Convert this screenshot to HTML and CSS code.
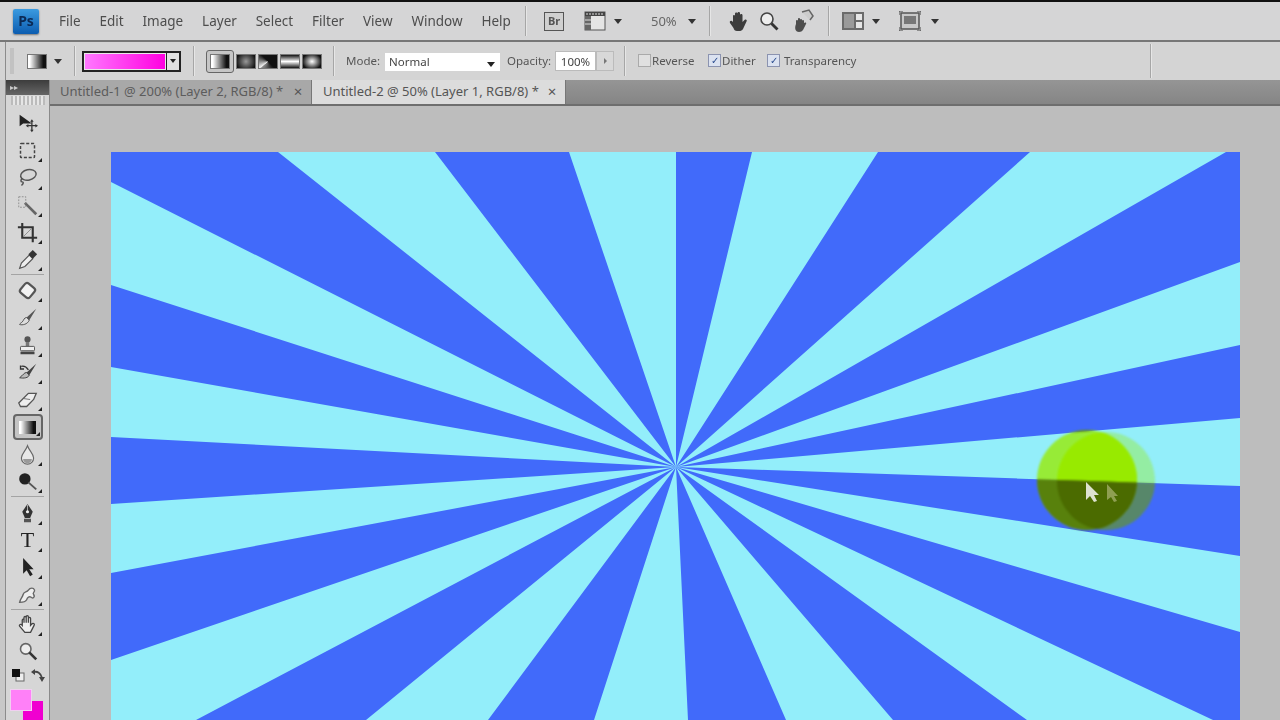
FILE: index.html
```html
<!DOCTYPE html>
<html lang="en">
<head>
    <meta charset="utf-8">
    <title>Adobe Photoshop CS4</title>
    <link rel="stylesheet" href="styles.css">
</head>
<body>
    <!-- Application bar -->
    <header class="menu-row soft">
        <div class="ps-logo">Ps</div>
        <nav class="menu">
            <span>File</span><span>Edit</span><span>Image</span><span>Layer</span><span>Select</span><span>Filter</span><span>View</span><span>Window</span><span>Help</span>
        </nav>
        <i class="sep sep-a"></i>
        <div class="br-btn">Br</div>
        <svg class="app-icon view-icon" width="22" height="20" viewBox="0 0 22 20"><rect x="1" y="1" width="20" height="18" fill="#e4e4e4" stroke="#555"/><rect x="1" y="1" width="20" height="4" fill="#444"/><path d="M3 2v2M6 2v2M9 2v2M12 2v2M15 2v2M18 2v2" stroke="#ddd"/><rect x="1" y="5" width="6" height="14" fill="#666"/><path d="M1 9h6M1 13h6" stroke="#ddd"/></svg>
        <i class="caret caret-view"></i>
        <span class="zoom-level">50%</span>
        <i class="caret caret-zoom"></i>
        <i class="sep sep-b"></i>
        <svg class="hand-icon" width="22" height="22" viewBox="0 0 22 22"><path d="M5 12V6c0-1.500 2-1.500 2 0v3V3.500c0-1.500 2.500-1.500 2.500 0V9V3c0-1.500 2.500-1.500 2.500 0v6V5c0-1.500 2.500-1.500 2.500 0v7l2-2c1.500-1.300 3 .2 2 1.500L15 19c-1 1.500-2 2-4 2H9c-2 0-3-1-3.500-3L2 13c-1-2 1.500-3 2.500-1.500z" fill="#3d3d3d"/></svg>
        <svg class="glass-icon" width="20" height="20" viewBox="0 0 20 20"><circle cx="8" cy="8" r="6" fill="#eee" stroke="#444" stroke-width="1.600"/><path d="M12.500 12.500L18.500 18.500" stroke="#333" stroke-width="2.800"/></svg>
        <svg class="rotate-icon" width="22" height="24" viewBox="0 0 22 24"><path d="M9 3l7-2 4 6-3 4" fill="#ccc" stroke="#666" stroke-width="1.500"/><path d="M3 15v-3c0-1.500 2-1.500 2 0v-2c0-1.500 2-1.500 2 0v1c0-1.500 2-1.500 2 0v1c0-1.500 2-1.500 2 0v2c1-1 3-.5 2 1l-3 6c-1 1-2 2-4 2-3 0-5-3-3-8z" fill="#4d4d4d"/></svg>
        <i class="sep sep-c"></i>
        <svg class="arrange-icon" width="22" height="18" viewBox="0 0 22 18"><rect width="22" height="18" fill="#6b6b6b"/><rect x="2" y="2" width="10" height="14" fill="#9a9a9a"/><rect x="14" y="2" width="6" height="6" fill="#e6e6e6"/><rect x="14" y="10" width="6" height="6" fill="#e6e6e6"/></svg>
        <i class="caret caret-arrange"></i>
        <svg class="screen-icon" width="22" height="20" viewBox="0 0 22 20"><rect x="2" y="2" width="18" height="16" fill="#c8c8c8" stroke="#555" stroke-width="1.500"/><rect x="5" y="5" width="12" height="8" fill="#777"/><path d="M0 4V0h4M18 0h4v4M0 16v4h4M18 20h4v-4" fill="none" stroke="#444"/></svg>
        <i class="caret caret-screen"></i>
    </header>

    <!-- Tool options -->
    <section class="options-row soft">
        <i class="grip"></i>
        <div class="grad-icon g-linear preset-icon"></div>
        <i class="caret caret-preset"></i>
        <i class="sep sep-d"></i>
        <div class="grad-picker">
            <div class="grad-fill"></div>
            <div class="grad-drop"><i class="caret"></i></div>
        </div>
        <i class="sep sep-e"></i>
        <div class="mode-btns">
            <div class="mode-on"><div class="grad-icon g-linear"></div></div>
            <div class="grad-icon g-radial"></div>
            <div class="grad-icon g-angle"></div>
            <div class="grad-icon g-reflect"></div>
            <div class="grad-icon g-diamond"></div>
        </div>
        <i class="sep sep-f"></i>
        <span class="opt-label mode-label">Mode:</span>
        <div class="select-box">Normal<i class="caret"></i></div>
        <span class="opt-label opacity-label">Opacity:</span>
        <div class="opacity-box">100%</div>
        <div class="opacity-step"><i></i></div>
        <i class="sep sep-g"></i>
        <span class="check check-reverse"></span><span class="opt-label reverse-label">Reverse</span>
        <span class="check on check-dither">✓</span><span class="opt-label dither-label">Dither</span>
        <span class="check on check-trans">✓</span><span class="opt-label trans-label">Transparency</span>
        <i class="sep sep-h"></i>
    </section>

    <div class="main">
        <!-- Tools panel -->
        <aside class="toolbox soft">
            <div class="panel-head">▸▸</div>
            <div class="panel-grip"></div>
            <div class="tool"><svg viewBox="0 0 24 24"><path d="M3 2l0 13 4-3 10 0z" fill="#222"/><path d="M17 9v11M11.500 14.500h11" stroke="#333" stroke-width="1.500"/><path d="M17 7l2 3h-4zM17 22l2-3h-4zM10 14.500l3-2v4zM24 14.500l-3-2v4z" fill="#333"/></svg></div>
            <div class="tool more"><svg viewBox="0 0 24 24"><rect x="4" y="4" width="16" height="16" rx="1" fill="none" stroke="#444" stroke-width="1.700" stroke-dasharray="3.500 2"/></svg></div>
            <div class="tool more"><svg viewBox="0 0 24 24"><ellipse cx="13" cy="9" rx="9" ry="6" fill="none" stroke="#555" stroke-width="1.700" transform="rotate(-12 13 9)"/><path d="M6 13c-2 2-2 4 0 4s1 3-1 4" fill="none" stroke="#555" stroke-width="1.700"/></svg></div>
            <div class="tool more"><svg viewBox="0 0 24 24"><path d="M9 9l13 13" stroke="#666" stroke-width="3"/><rect x="2" y="2" width="8" height="12" fill="none" stroke="#888" stroke-dasharray="2 1.500"/></svg></div>
            <div class="tool more"><svg viewBox="0 0 24 24"><path d="M6 1v17h17M1 6h17v17" fill="none" stroke="#333" stroke-width="2.400"/><path d="M7 17L17 7" stroke="#888"/></svg></div>
            <div class="tool more"><svg viewBox="0 0 24 24"><path d="M3 22l2-6 9-9 4 4-9 9z" fill="#eee" stroke="#555" stroke-width="1.300"/><path d="M13 6l5-5 5 5-5 5z" fill="#333"/></svg></div>
            <div class="tool-sep"></div>
            <div class="tool more"><svg viewBox="0 0 24 24"><rect x="5" y="5" width="14" height="14" rx="3" fill="#f2f2f2" stroke="#555" stroke-width="2.500" transform="rotate(40 12 12)"/></svg></div>
            <div class="tool more"><svg viewBox="0 0 24 24"><path d="M22 2L11 12l3 3z" fill="#555"/><path d="M11 12c-3 0-3 3-5 5-1 1-3 2-3 3 3 1 9 0 11-5z" fill="#ddd" stroke="#444"/></svg></div>
            <div class="tool more"><svg viewBox="0 0 24 24"><circle cx="12" cy="5" r="3.500" fill="#555"/><path d="M10 8h4v5h-4z" fill="#777"/><rect x="4" y="13" width="16" height="5" rx="1" fill="#eee" stroke="#444"/><rect x="4" y="19" width="16" height="3" fill="#444"/></svg></div>
            <div class="tool more"><svg viewBox="0 0 24 24"><path d="M22 2L11 12l3 3z" fill="#444"/><path d="M11 12c-3 0-4 3-8 6 5 1 10 0 11-3z" fill="#bbb" stroke="#333"/><path d="M5 5c4-1 6 1 8 4M4 4v4h4" fill="none" stroke="#333" stroke-width="1.500"/></svg></div>
            <div class="tool more"><svg viewBox="0 0 24 24"><path d="M2 16L13 5h9l-3 7-8 8H4z" fill="#eee" stroke="#555" stroke-width="1.500"/><path d="M8 11l7 1" stroke="#666"/></svg></div>
            <div class="tool tool-on more"><div class="grad-icon g-linear"></div></div>
            <div class="tool more"><svg viewBox="0 0 24 24"><path d="M12 2c-2 6-7 9-7 14a7 7 0 0 0 14 0c0-5-5-8-7-14z" fill="#e8e8e8" stroke="#666" stroke-width="1.300"/><path d="M7 17a5 5 0 0 0 10 0z" fill="#999"/></svg></div>
            <div class="tool more"><svg viewBox="0 0 24 24"><circle cx="9" cy="9" r="6.500" fill="#222"/><path d="M13 13l9 8" stroke="#555" stroke-width="2.200"/></svg></div>
            <div class="tool-sep"></div>
            <div class="tool more"><svg viewBox="0 0 24 24"><path d="M12 1l6 9-3 7H9l-3-7z" fill="#333"/><circle cx="12" cy="10" r="1.800" fill="#eee"/><path d="M12 2v8" stroke="#eee" stroke-width=".7"/><rect x="8" y="18" width="8" height="4" fill="#555"/></svg></div>
            <div class="tool more tool-type">T</div>
            <div class="tool more"><svg viewBox="0 0 24 24"><path d="M7 1v18l4-4 4 7 3-2-4-6h5z" fill="#222"/></svg></div>
            <div class="tool more"><svg viewBox="0 0 24 24"><path d="M3 21c1-5 3-5 4-9s4-2 6-5c2-3 6-3 7 0 1 2-3 3-1 5 2 3-1 5-3 3-2-1-4 0-5 3-1 2-5 3-8 3z" fill="#eee" stroke="#666" stroke-width="1.600"/></svg></div>
            <div class="tool-sep tool-sep-last"></div>
            <div class="tool more"><svg viewBox="0 0 24 24"><path d="M6 13V7c0-1.500 2-1.500 2 0v3V4c0-1.500 2.500-1.500 2.500 0v6V3c0-1.500 2.500-1.500 2.500 0v7V5c0-1.500 2.500-1.500 2.500 0v8l2-2c1.500-1 3 .5 2 2l-4 8H9L3 14c-1-2 1.500-3 3-1z" fill="#eee" stroke="#444" stroke-width="1.500"/></svg></div>
            <div class="tool"><svg viewBox="0 0 24 24"><circle cx="10" cy="9" r="6" fill="#eee" stroke="#666" stroke-width="1.800"/><path d="M14 13l8 8" stroke="#333" stroke-width="3"/></svg></div>
            <div class="swap-row">
                <svg width="14" height="14" viewBox="0 0 14 14"><rect x="5" y="5" width="8" height="8" fill="#eee" stroke="#666"/><rect x="1" y="1" width="8" height="8" fill="#111"/></svg>
                <svg width="14" height="14" viewBox="0 0 14 14"><path d="M3 4c3-1 7 1 8 6" fill="none" stroke="#444" stroke-width="1.800"/><path d="M8 9l3 5 3-5zM4 1L0 4l4 3z" fill="#444"/></svg>
            </div>
            <div class="swatches">
                <div class="swatch-bg"></div>
                <div class="swatch-fg"></div>
            </div>
        </aside>

        <div class="doc-area">
            <div class="tabs">
                <div class="tab">Untitled-1 @ 200% (Layer 2, RGB/8) *<span class="tab-x">×</span></div>
                <div class="tab tab-active">Untitled-2 @ 50% (Layer 1, RGB/8) *<span class="tab-x">×</span></div>
            </div>
            <div class="workspace">
                <!-- Sunburst artwork with the click highlight and cursor over it -->
                <svg class="artwork" width="1129" height="568" viewBox="111 152 1129 568">
                    <defs>
                        <path id="rays" d="M676 467L676 152L752 152ZM676 467L878 152L1030 152ZM676 467L1226 152L1240 152L1240 262ZM676 467L1240 345L1240 418ZM676 467L1240 486L1240 556ZM676 467L1240 632L1240 720L1213 720ZM676 467L1027 720L893 720ZM676 467L786 720L688 720ZM676 467L594 720L488 720ZM676 467L366 720L196 720ZM676 467L111 660L111 573ZM676 467L111 504L111 437ZM676 467L111 367L111 285ZM676 467L111 182L111 152L278 152ZM676 467L435 152L569 152Z"/>
                        <clipPath id="rays-clip"><use href="#rays"/></clipPath>
                        <clipPath id="ghost-clip"><circle cx="1106" cy="481" r="49"/></clipPath>
                        <g id="click-ring">
                            <circle cx="1087" cy="480" r="50" opacity=".78"/>
                            <circle cx="1106" cy="481" r="49" opacity=".35"/>
                            <g clip-path="url(#ghost-clip)"><circle cx="1087" cy="480" r="50"/></g>
                        </g>
                    </defs>
                    <rect x="111" y="152" width="1129" height="568" fill="#93eefa"/>
                    <use href="#rays" fill="#416afa"/>
                    <g class="ring-soft">
                        <use href="#click-ring" fill="#98ea00"/>
                        <g clip-path="url(#rays-clip)"><use href="#click-ring" fill="#4b6b00"/></g>
                    </g>
                    <path d="M1086 482v18l4-4 4 6 3-1-3-6h5z" fill="#dde2d0"/>
                    <path d="M1107 484v16l4-3 3 5 3-1-3-5h4z" fill="#8f9f52"/>
                </svg>
            </div>
        </div>
    </div>
</body>
</html>
```

FILE: styles.css
```css
body {
    margin: 0;
    width: 1280px;
    height: 720px;
    overflow: hidden;
    background-color: #d4d4d4;
    font-family: "Noto Sans", "Open Sans", sans-serif;
    color: #555;
    display: flex;
    flex-direction: column;
}
.soft {
    filter: blur(0.4px);
}
i {
    display: block;
    flex: none;
}
.sep {
    width: 2px;
    height: 30px;
    background-color: #a6a6a6;
    border-right: 1px solid #e6e6e6;
    box-sizing: border-box;
}
.caret {
    width: 0;
    height: 0;
    border-left: 4px solid transparent;
    border-right: 4px solid transparent;
    border-top: 5px solid #333;
}

/* top bar */
.menu-row {
    height: 38px;
    flex: none;
    border-top: 2px solid #111;
    border-bottom: 2px solid #777;
    background-color: #d5d5d6;
    display: flex;
    align-items: center;
    padding-left: 13px;
    box-sizing: content-box;
}
.ps-logo {
    width: 26px;
    height: 25px;
    border-radius: 2px;
    background: linear-gradient(#3b9be0, #0c5cb0);
    box-shadow: 0 1px 2px #777;
    color: #0b2a55;
    font-weight: bold;
    font-size: 14px;
    line-height: 23px;
    text-align: center;
    flex: none;
}
.menu {
    width: 452px;
    margin-left: 20px;
    display: flex;
    justify-content: space-between;
    font-size: 13.5px;
    color: #4d4d4d;
    flex: none;
}
.sep-a { margin-left: 14px; }
.br-btn {
    width: 18px;
    height: 17px;
    margin-left: 17px;
    border: 1px solid #555;
    background-color: #d0d0d0;
    font-size: 11px;
    font-weight: bold;
    line-height: 16px;
    text-align: center;
    color: #555;
    flex: none;
}
.app-icon, .hand-icon, .glass-icon, .rotate-icon, .arrange-icon, .screen-icon {
    flex: none;
}
.view-icon { margin-left: 20px; }
.caret-view { margin-left: 8px; }
.zoom-level {
    width: 32px;
    margin-left: 29px;
    font-size: 13px;
    color: #666;
    flex: none;
}
.caret-zoom { margin-left: 5px; }
.sep-b { margin-left: 13px; }
.hand-icon { margin-left: 17px; }
.glass-icon { margin-left: 9px; }
.rotate-icon { margin-left: 14px; }
.sep-c { margin-left: 13px; }
.arrange-icon { margin-left: 12px; }
.caret-arrange { margin-left: 8px; }
.screen-icon { margin-left: 19px; }
.caret-screen { margin-left: 10px; }

/* options bar */
.options-row {
    height: 38px;
    flex: none;
    background-color: #d4d4d4;
    border-left: 1px solid #8c8c8c;
    margin-left: 5px;
    display: flex;
    align-items: center;
    font-size: 11.5px;
}
.grip {
    width: 4px;
    height: 26px;
    margin-left: 4px;
    background-color: #c2c2c2;
}
.grad-icon {
    width: 18px;
    height: 13px;
    flex: none;
    border: 1px solid #777;
    box-sizing: content-box;
}
.g-linear { background: linear-gradient(90deg, #fff 10%, #111 85%); }
.g-radial { background: radial-gradient(circle, #999, #111 90%); }
.g-angle { background: conic-gradient(from 45deg, #111 0 25%, #888 50%, #eee 52%, #111 75%); }
.g-reflect { background: linear-gradient(#111, #fff 50%, #111); }
.g-diamond { background: radial-gradient(ellipse 60% 70%, #fff, #111 90%); }
.preset-icon { margin-left: 13px; }
.caret-preset { margin-left: 7px; }
.sep-d { margin-left: 12px; }
.grad-picker {
    width: 99px;
    height: 21px;
    margin-left: 6px;
    border: 2px solid #222;
    display: flex;
    flex: none;
    box-sizing: border-box;
}
.grad-fill {
    flex: 1;
    background: linear-gradient(90deg, #ff78ff, #ff00e0);
    border: 1px solid #e8e8e8;
}
.grad-drop {
    width: 12px;
    background-color: #e2e2e2;
    border-left: 1px solid #222;
    display: flex;
    align-items: center;
    justify-content: center;
}
.grad-drop .caret {
    border-width: 4px 3px 0;
    border-top-color: #222;
}
.sep-e { margin-left: 12px; }
.mode-btns {
    width: 116px;
    margin-left: 11px;
    display: flex;
    align-items: center;
    justify-content: space-between;
    flex: none;
}
.mode-on {
    padding: 3px;
    border: 1px solid #666;
    border-radius: 3px;
    background-color: #c6c6c6;
}
.sep-f { margin-left: 11px; }
.opt-label {
    color: #555;
    flex: none;
    margin-top: -2px;
}
.mode-label { margin-left: 11px; width: 39px; }
.select-box {
    width: 115px;
    height: 18px;
    box-sizing: border-box;
    padding-left: 4px;
    background-color: #fff;
    font-size: 11.5px;
    line-height: 18px;
    color: #444;
    display: flex;
    align-items: center;
    justify-content: space-between;
    flex: none;
    margin-bottom: -2px;
}
.select-box .caret {
    margin: 4px 5px 0 0;
    border-top-color: #222;
}
.opacity-label { margin-left: 7px; width: 48px; }
.opacity-box {
    width: 41px;
    height: 20px;
    box-sizing: border-box;
    background-color: #fff;
    border: 1px solid #bbb;
    text-align: center;
    line-height: 19px;
    color: #444;
    flex: none;
}
.opacity-step {
    width: 18px;
    height: 20px;
    box-sizing: border-box;
    border: 1px solid #bbb;
    background-color: #d8d8d8;
    display: flex;
    align-items: center;
    justify-content: center;
    flex: none;
}
.opacity-step i {
    border-left: 3px solid #777;
    border-top: 3px solid transparent;
    border-bottom: 3px solid transparent;
}
.sep-g { margin-left: 10px; }
.check {
    width: 11px;
    height: 11px;
    border: 1px solid #aaa;
    background-color: #e0e0e0;
    font-size: 10px;
    line-height: 11px;
    text-align: center;
    color: #2d4f90;
    flex: none;
    margin-top: -2px;
}
.check.on {
    background-color: #dbe2f0;
    border-color: #8b93b0;
}
.check-reverse { margin-left: 12px; }
.reverse-label { margin-left: 1px; width: 44px; }
.check-dither { margin-left: 12px; }
.dither-label { margin-left: 1px; width: 34px; }
.check-trans { margin-left: 11px; }
.trans-label { margin-left: 4px; width: 75px; }
.sep-h { margin-left: 291px; height: 34px; }

/* tools panel + document */
.main {
    flex: 1;
    display: flex;
    min-height: 0;
    padding-left: 5px;
    background-color: #c8c8c8;
}
.toolbox {
    width: 43px;
    flex: none;
    background-color: #d6d6d6;
    border-left: 1px solid #8c8c8c;
    border-right: 1px solid #8a8a8a;
    box-sizing: content-box;
    display: flex;
    flex-direction: column;
    align-items: center;
}
.panel-head {
    width: 100%;
    height: 15px;
    flex: none;
    background: linear-gradient(#3c3c3c, #666);
    color: #ccc;
    font-size: 8px;
    line-height: 14px;
    padding-left: 4px;
    box-sizing: border-box;
}
.panel-grip {
    width: 34px;
    height: 9px;
    margin: 1px 0 5px;
    flex: none;
    background: repeating-linear-gradient(90deg, #bbb 0 2px, #e6e6e6 2px 4px);
}
.tool {
    width: 30px;
    height: 27.2px;
    flex: none;
    display: flex;
    align-items: center;
    justify-content: center;
    position: relative;
}
.tool svg {
    width: 21px;
    height: 21px;
}
.tool.more::after {
    content: "";
    position: absolute;
    right: 1px;
    bottom: 2px;
    border-left: 4px solid transparent;
    border-bottom: 4px solid #222;
}
.tool-on {
    box-sizing: border-box;
    height: 26px;
    width: 30px;
    margin: 1px 0;
    border: 2px solid #666;
    border-radius: 4px;
    background-color: #c4c4c4;
}
.tool-on .grad-icon {
    width: 17px;
    height: 13px;
    border: 0;
}
.tool-sep {
    width: 33px;
    height: 1px;
    margin: 1px 0 2px;
    flex: none;
    background-color: #a4a4a4;
}
.tool-sep-last {
    margin-bottom: 1px;
}
.tool-type {
    font-family: "Liberation Serif", serif;
    font-size: 22px;
    color: #222;
}
.swap-row {
    width: 34px;
    height: 16px;
    margin-top: 2px;
    display: flex;
    justify-content: space-between;
    flex: none;
}
.swatches {
    width: 34px;
    height: 36px;
    margin: 5px 0 0 -2px;
    position: relative;
    flex: none;
}
.swatch-fg {
    position: absolute;
    left: 0;
    top: 0;
    width: 22px;
    height: 22px;
    background-color: #ff80f8;
    border: 1px solid #f0d0f0;
    box-sizing: border-box;
}
.swatch-bg {
    position: absolute;
    left: 13px;
    top: 12px;
    width: 20px;
    height: 24px;
    background-color: #f000d0;
}
.doc-area {
    flex: 1;
    min-width: 0;
    display: flex;
    flex-direction: column;
}
.tabs {
    height: 24px;
    flex: none;
    display: flex;
    background: linear-gradient(#959595, #858585);
    border-bottom: 2px solid #6e6e6e;
    font-size: 13px;
}
.tab {
    width: 262px;
    box-sizing: border-box;
    padding-left: 10px;
    color: #5c5c5c;
    line-height: 23px;
    background-color: #a8a8a8;
    border-right: 1px solid #777;
    display: flex;
    justify-content: space-between;
    white-space: nowrap;
}
.tab-active {
    width: 254px;
    padding-left: 11px;
    background-color: #dcdcdc;
    color: #555;
}
.tab-x {
    width: 26px;
    text-align: center;
    font-size: 15px;
    color: #555;
    flex: none;
}
.workspace {
    flex: 1;
    min-height: 0;
    background-color: #bdbdbd;
    padding: 46px 0 0 61px;
}
.artwork {
    display: block;
    filter: blur(0.6px);
}
.ring-soft {
    filter: blur(1.2px);
}
```
